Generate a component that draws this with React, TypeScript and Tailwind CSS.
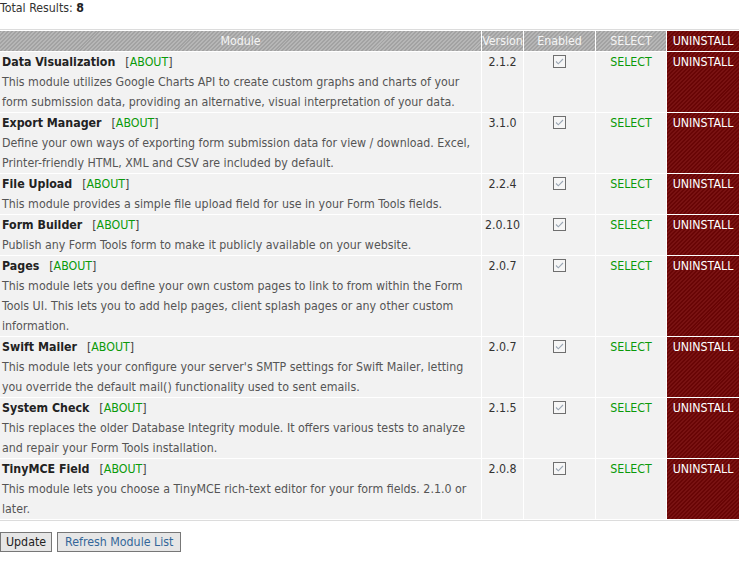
import React from "react";

type Mod = {
  name: string;
  lines: string[];
  version: string;
};

const modules: Mod[] = [
  {
    name: "Data Visualization",
    lines: [
      "This module utilizes Google Charts API to create custom graphs and charts of your",
      "form submission data, providing an alternative, visual interpretation of your data.",
    ],
    version: "2.1.2",
  },
  {
    name: "Export Manager",
    lines: [
      "Define your own ways of exporting form submission data for view / download. Excel,",
      "Printer-friendly HTML, XML and CSV are included by default.",
    ],
    version: "3.1.0",
  },
  {
    name: "File Upload",
    lines: ["This module provides a simple file upload field for use in your Form Tools fields."],
    version: "2.2.4",
  },
  {
    name: "Form Builder",
    lines: ["Publish any Form Tools form to make it publicly available on your website."],
    version: "2.0.10",
  },
  {
    name: "Pages",
    lines: [
      "This module lets you define your own custom pages to link to from within the Form",
      "Tools UI. This lets you to add help pages, client splash pages or any other custom",
      "information.",
    ],
    version: "2.0.7",
  },
  {
    name: "Swift Mailer",
    lines: [
      "This module lets your configure your server's SMTP settings for Swift Mailer, letting",
      "you override the default mail() functionality used to sent emails.",
    ],
    version: "2.0.7",
  },
  {
    name: "System Check",
    lines: [
      "This replaces the older Database Integrity module. It offers various tests to analyze",
      "and repair your Form Tools installation.",
    ],
    version: "2.1.5",
  },
  {
    name: "TinyMCE Field",
    lines: [
      "This module lets you choose a TinyMCE rich-text editor for your form fields. 2.1.0 or",
      "later.",
    ],
    version: "2.0.8",
  },
];

const headCell =
  "bg-[image:repeating-linear-gradient(135deg,#a2a2a2_0px,#a2a2a2_1.4px,#b6b6b6_1.4px,#b6b6b6_2.8px)] text-[#f4f4f4] text-center h-[20px] leading-[20px] whitespace-nowrap overflow-hidden";
const redCell =
  "bg-[image:repeating-linear-gradient(135deg,#690505_0px,#690505_1.4px,#791212_1.4px,#791212_2.8px)] text-white text-center";

function Checkbox() {
  return (
    <svg width="13" height="13" viewBox="0 0 13 13" className="mx-auto mt-[3px] block">
      <rect x="0.5" y="0.5" width="12" height="12" fill="#f6f6f6" stroke="#6f6f6f" />
      <path d="M3 6.5 L5.3 8.8 L10 4" fill="none" stroke="#9aa6b4" strokeWidth="1.1" />
    </svg>
  );
}

export default function App() {
  return (
    <div className="w-[740px] bg-white font-['DejaVu_Sans_Condensed','DejaVu_Sans',sans-serif] text-[12.3px] text-[#333]">
      <div className="h-[16px] leading-[16px]">
        Total Results: <b className="text-[#222]">8</b>
      </div>
      <div className="mt-[13px] w-[739px] border-y border-[#dcdcdc] py-px">
        <div className="grid grid-cols-[481px_41px_71px_70px_72px] gap-px">
          <div className={headCell}>Module</div>
          <div className={headCell}>Version</div>
          <div className={headCell}>Enabled</div>
          <div className={headCell}>SELECT</div>
          <div className={redCell + " h-[20px] leading-[20px]"}>UNINSTALL</div>

          {modules.map((m) => (
            <React.Fragment key={m.name}>
              <div className="bg-[#f2f2f2] px-[2px] leading-[20px] whitespace-nowrap">
                <div>
                  <span className="font-bold text-[#222]">{m.name}</span>
                  <span className="ml-[10px] text-[#444]">
                    [<span className="text-[#0a9a0a]">ABOUT</span>]
                  </span>
                </div>
                {m.lines.map((l, i) => (
                  <div key={i} className="text-[#555]">
                    {l}
                  </div>
                ))}
              </div>
              <div className="bg-[#f2f2f2] text-center leading-[20px]">{m.version}</div>
              <div className="bg-[#f2f2f2]">
                <Checkbox />
              </div>
              <div className="bg-[#f2f2f2] text-center leading-[20px] text-[#0a9a0a]">SELECT</div>
              <div className={redCell + " leading-[20px]"}>UNINSTALL</div>
            </React.Fragment>
          ))}
        </div>
      </div>
      <div className="mt-[11px] flex gap-[5px]">
        <button className="h-[20px] border border-[#777] bg-[#e6e6e6] px-[5px] leading-[18px] text-[#222]">
          Update
        </button>
        <button className="h-[20px] border border-[#777] bg-[#e6e6e6] px-[7px] leading-[18px] text-[#336699]">
          Refresh Module List
        </button>
      </div>
    </div>
  );
}
